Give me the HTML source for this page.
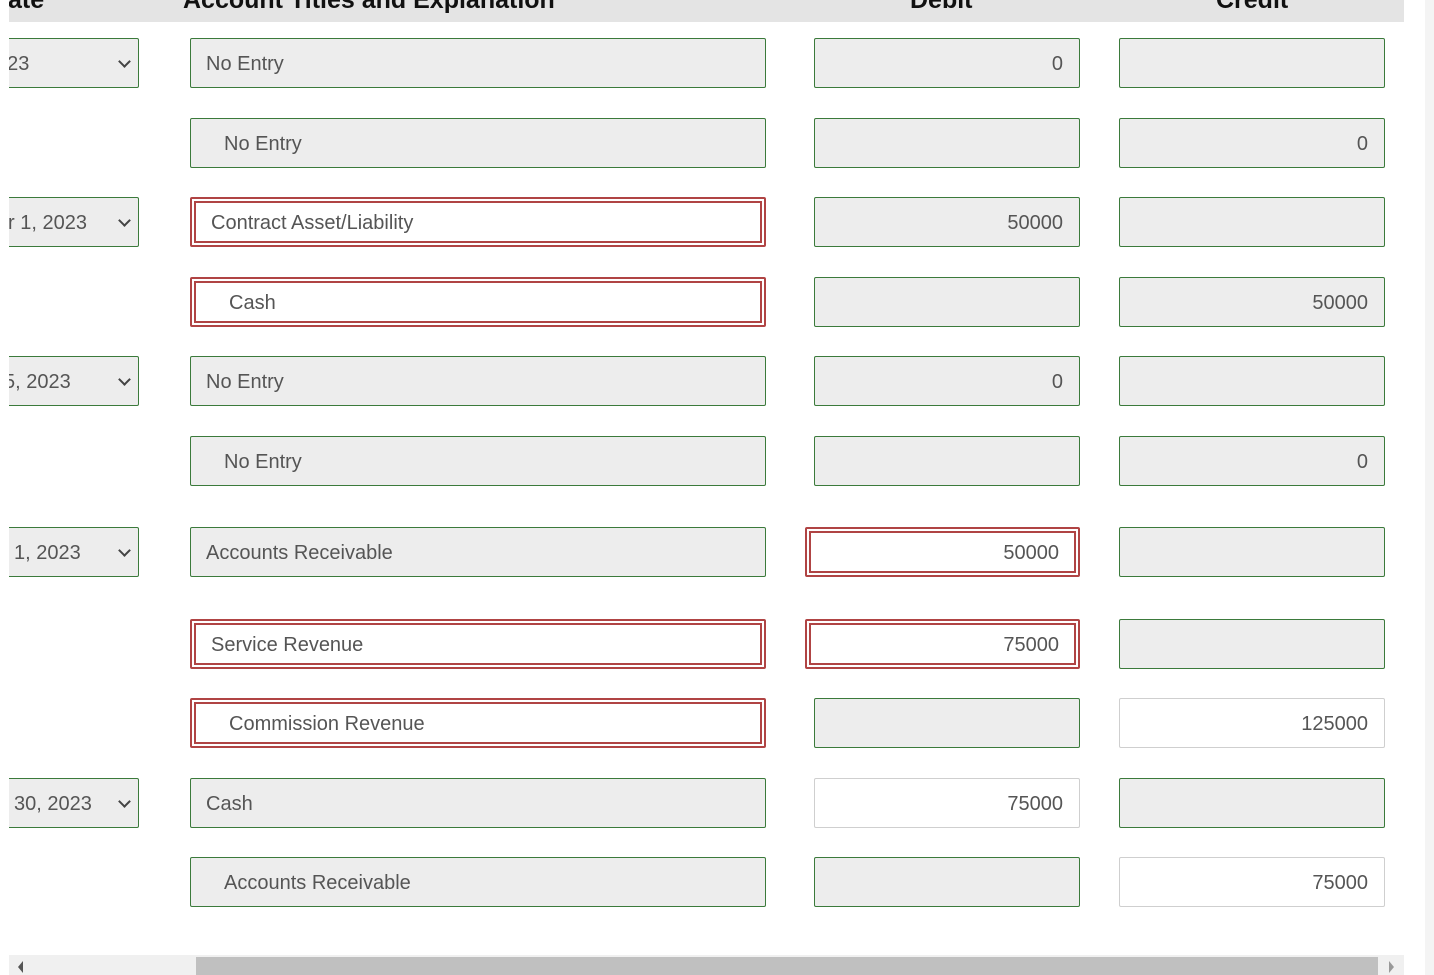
<!DOCTYPE html>
<html><head><meta charset="utf-8"><style>
*{box-sizing:border-box;margin:0;padding:0}
body{width:1434px;height:975px;background:#fff;position:relative;overflow:hidden;font-family:"Liberation Sans",sans-serif;color:#555}
.hdr{position:absolute;left:9px;top:0;width:1395px;height:22px;background:#e4e4e4;overflow:hidden}
.hdr span{position:absolute;top:-14px;font-weight:bold;font-size:25px;color:#111}
.clip{position:absolute;left:9px;top:0;width:1420px;height:975px;overflow:hidden}
.b{position:absolute;height:50px;background:#ededed;border:1px solid #3b7a3b;border-radius:2px;font-size:20px;line-height:50px;white-space:nowrap}
.w{background:#fff;border:1px solid #cfcfcf}
.r{background:#fff;border:2px solid #b04444;box-shadow:inset 0 0 0 2px #fff,inset 0 0 0 4px #b04444;line-height:48px}
.num{text-align:right}
.sel{left:-60px;width:190px;padding-left:66px}
.sel:after{content:"";position:absolute;right:9px;top:18px;width:7px;height:7px;border-right:2px solid #444;border-bottom:2px solid #444;transform:rotate(45deg)}
.acc{left:181px;width:576px}
.deb{left:805px;width:266px;padding-right:16px}
.debr{left:796px;width:275px;padding-right:19px}
.cre{left:1110px;width:266px;padding-right:16px}
.sb{position:absolute;left:9px;top:955px;width:1395px;height:20px;background:#f0f0f0}
.th{position:absolute;left:196px;top:957px;width:1182px;height:18px;background:#c0c0c0}
.rs{position:absolute;left:1425px;top:0;width:9px;height:975px;background:#f4f4f4}
</style></head><body>
<div class="hdr">
<span style="left:-1px">ate</span>
<span style="left:174px">Account Titles and Explanation</span>
<span style="left:901px">Debit</span>
<span style="left:1207px">Credit</span>
</div>
<div class="clip">
<div class="b sel" style="top:38px;padding-left:46px">023</div>
<div class="b acc" style="top:38px;padding-left:15px">No Entry</div>
<div class="b num deb" style="top:38px">0</div>
<div class="b cre" style="top:38px"></div>

<div class="b acc" style="top:118px;padding-left:33px">No Entry</div>
<div class="b deb" style="top:118px"></div>
<div class="b num cre" style="top:118px">0</div>

<div class="b sel" style="top:197px;padding-left:58px">r 1, 2023</div>
<div class="b r acc" style="top:197px;padding-left:19px">Contract Asset/Liability</div>
<div class="b num deb" style="top:197px">50000</div>
<div class="b cre" style="top:197px"></div>

<div class="b r acc" style="top:277px;padding-left:37px">Cash</div>
<div class="b deb" style="top:277px"></div>
<div class="b num cre" style="top:277px">50000</div>

<div class="b sel" style="top:356px;padding-left:54px">5, 2023</div>
<div class="b acc" style="top:356px;padding-left:15px">No Entry</div>
<div class="b num deb" style="top:356px">0</div>
<div class="b cre" style="top:356px"></div>

<div class="b acc" style="top:436px;padding-left:33px">No Entry</div>
<div class="b deb" style="top:436px"></div>
<div class="b num cre" style="top:436px">0</div>

<div class="b sel" style="top:527px;padding-left:64px">1, 2023</div>
<div class="b acc" style="top:527px;padding-left:15px">Accounts Receivable</div>
<div class="b r num debr" style="top:527px">50000</div>
<div class="b cre" style="top:527px"></div>

<div class="b r acc" style="top:619px;padding-left:19px">Service Revenue</div>
<div class="b r num debr" style="top:619px">75000</div>
<div class="b cre" style="top:619px"></div>

<div class="b r acc" style="top:698px;padding-left:37px">Commission Revenue</div>
<div class="b deb" style="top:698px"></div>
<div class="b w num cre" style="top:698px">125000</div>

<div class="b sel" style="top:778px;padding-left:64px">30, 2023</div>
<div class="b acc" style="top:778px;padding-left:15px">Cash</div>
<div class="b w num deb" style="top:778px">75000</div>
<div class="b cre" style="top:778px"></div>

<div class="b acc" style="top:857px;padding-left:33px">Accounts Receivable</div>
<div class="b deb" style="top:857px"></div>
<div class="b w num cre" style="top:857px">75000</div>
</div>
<div class="sb"></div>
<div class="th"></div>
<svg style="position:absolute;left:16px;top:960px" width="10" height="14"><path d="M7 1 L2 7 L7 13Z" fill="#555"/></svg>
<svg style="position:absolute;left:1386px;top:960px" width="10" height="14"><path d="M3 1 L8 7 L3 13Z" fill="#999"/></svg>
<div class="rs"></div>
</body></html>
